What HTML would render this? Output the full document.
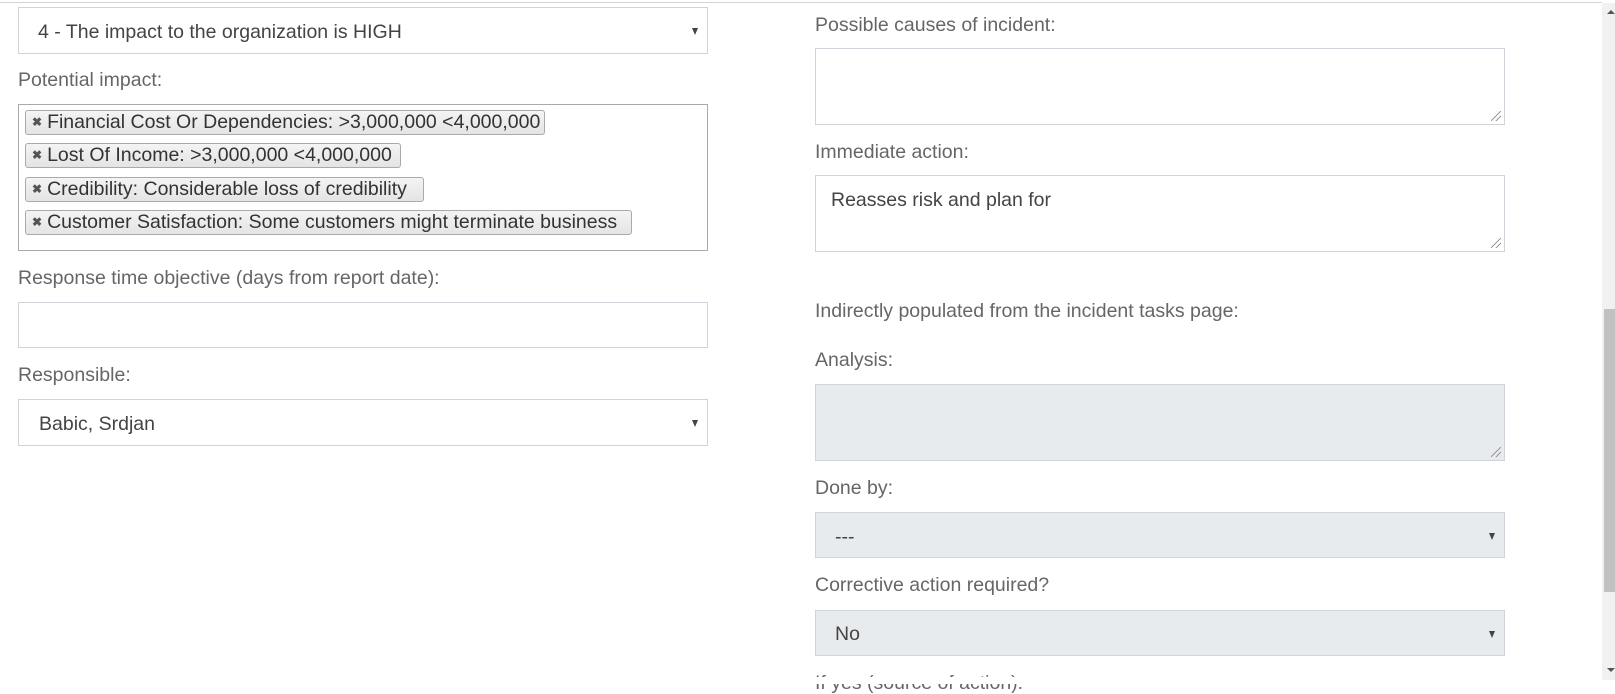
<!DOCTYPE html>
<html><head><style>
*{box-sizing:border-box;margin:0;padding:0}
body{width:1615px;height:684px;overflow:hidden;background:#fff;font-family:"Liberation Sans",sans-serif;font-size:19.5px;color:#555;position:relative}
.a{position:absolute}
.line{left:0;top:2px;width:1602px;height:1px;background:#d4d4d4}
.lbl{position:absolute;color:#666;line-height:22px;white-space:nowrap}
.box{position:absolute;border:1px solid #cfd4da;background:#fff}
.gray{background:#e8ebee}
.txt{position:absolute;line-height:22px;color:#444;white-space:nowrap}
.arr{position:absolute;width:0;height:0;border-left:3.5px solid transparent;border-right:3.5px solid transparent;border-top:7px solid #444}
.tag{position:absolute;left:25px;height:25px;border:1px solid #aaa;border-radius:3px;background:linear-gradient(#f4f4f4,#e4e4e4);line-height:23px;padding-left:6px;color:#333;white-space:nowrap;overflow:hidden}
.tag b{font-size:12px;color:#555;margin-right:5px;vertical-align:2px}
.rz{position:absolute;width:10px;height:10px;background:linear-gradient(135deg,transparent 45%,#888 46%,#888 52%,transparent 53%,transparent 70%,#888 71%,#888 77%,transparent 78%)}
</style></head><body>
<div class="a line"></div>

<div class="box" style="left:18px;top:7px;width:690px;height:47px"></div>
<div class="txt" style="left:38px;top:21px">4 - The impact to the organization is HIGH</div>
<div class="arr" style="left:692px;top:28px"></div>

<div class="lbl" style="left:18px;top:69px">Potential impact:</div>
<div class="box" style="left:18px;top:104px;width:690px;height:147px;border-color:#aaa"></div>
<div class="tag" style="top:110px;width:520px"><b>✖</b>Financial Cost Or Dependencies: &gt;3,000,000 &lt;4,000,000</div>
<div class="tag" style="top:143px;width:376px"><b>✖</b>Lost Of Income: &gt;3,000,000 &lt;4,000,000</div>
<div class="tag" style="top:177px;width:399px"><b>✖</b>Credibility: Considerable loss of credibility</div>
<div class="tag" style="top:210px;width:607px"><b>✖</b>Customer Satisfaction: Some customers might terminate business</div>

<div class="lbl" style="left:18px;top:267px">Response time objective (days from report date):</div>
<div class="box" style="left:18px;top:302px;width:690px;height:46px"></div>

<div class="lbl" style="left:18px;top:364px">Responsible:</div>
<div class="box" style="left:18px;top:399px;width:690px;height:47px"></div>
<div class="txt" style="left:39px;top:413px">Babic, Srdjan</div>
<div class="arr" style="left:692px;top:420px"></div>

<div class="lbl" style="left:815px;top:14px">Possible causes of incident:</div>
<div class="box" style="left:815px;top:48px;width:690px;height:77px"></div>
<div class="rz" style="left:1491px;top:111px"></div>

<div class="lbl" style="left:815px;top:141px">Immediate action:</div>
<div class="box" style="left:815px;top:175px;width:690px;height:77px"></div>
<div class="txt" style="left:831px;top:189px">Reasses risk and plan for</div>
<div class="rz" style="left:1491px;top:238px"></div>

<div class="lbl" style="left:815px;top:300px">Indirectly populated from the incident tasks page:</div>
<div class="lbl" style="left:815px;top:349px">Analysis:</div>
<div class="box gray" style="left:815px;top:384px;width:690px;height:77px"></div>
<div class="rz" style="left:1491px;top:447px"></div>

<div class="lbl" style="left:815px;top:477px">Done by:</div>
<div class="box gray" style="left:815px;top:512px;width:690px;height:46px"></div>
<div class="txt" style="left:835px;top:526px">---</div>
<div class="arr" style="left:1489px;top:533px"></div>

<div class="lbl" style="left:815px;top:574px">Corrective action required?</div>
<div class="box gray" style="left:815px;top:610px;width:690px;height:46px"></div>
<div class="txt" style="left:835px;top:623px">No</div>
<div class="arr" style="left:1489px;top:631px"></div>

<div class="lbl" style="left:815px;top:672px">If yes (source of action):</div>

<div class="a" style="left:1602px;top:3px;width:13px;height:677px;background:#f1f1f1"></div>
<div class="a" style="left:1604px;top:309px;width:11px;height:283px;background:#c1c1c1"></div>
<div class="a" style="left:1607px;top:10px;width:0;height:0;border-left:4px solid transparent;border-right:4px solid transparent;border-bottom:4px solid #555"></div>
<div class="a" style="left:1607px;top:668px;width:0;height:0;border-left:4px solid transparent;border-right:4px solid transparent;border-top:4px solid #555"></div>
<div class="a" style="left:0;top:677px;width:1602px;height:7px;background:#fff"></div>
</body></html>
